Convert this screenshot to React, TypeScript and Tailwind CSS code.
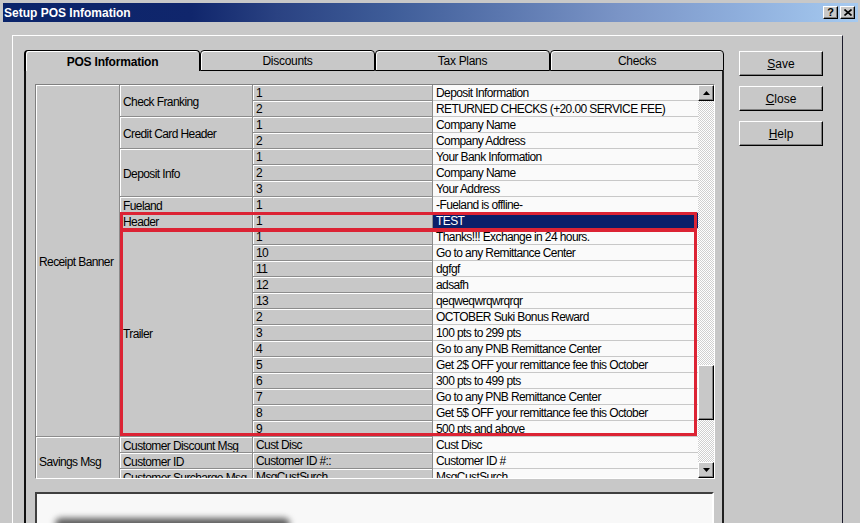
import React from 'react';
import clsx from 'clsx';

type Row = [string, string];
type Item = { label: string; rows: Row[]; selected?: boolean };
type Group = { name: string; items: Item[] };

const groups: Group[] = [
    {
        name: 'Receipt Banner',
        items: [
            { label: 'Check Franking', rows: [['1', 'Deposit Information'], ['2', 'RETURNED CHECKS (+20.00 SERVICE FEE)']] },
            { label: 'Credit Card Header', rows: [['1', 'Company Name'], ['2', 'Company Address']] },
            { label: 'Deposit Info', rows: [['1', 'Your Bank Information'], ['2', 'Company Name'], ['3', 'Your Address']] },
            { label: 'Fueland', rows: [['1', '-Fueland is offline-']] },
            { label: 'Header', rows: [['1', 'TEST']], selected: true },
            {
                label: 'Trailer',
                rows: [
                    ['1', 'Thanks!!! Exchange in 24 hours.'],
                    ['10', 'Go to any Remittance Center'],
                    ['11', 'dgfgf'],
                    ['12', 'adsafh'],
                    ['13', 'qeqweqwrqwrqrqr'],
                    ['2', 'OCTOBER Suki Bonus Reward'],
                    ['3', '100 pts to 299 pts'],
                    ['4', 'Go to any PNB Remittance Center'],
                    ['5', 'Get 2$ OFF your remittance fee this October'],
                    ['6', '300 pts to 499 pts'],
                    ['7', 'Go to any PNB Remittance Center'],
                    ['8', 'Get 5$ OFF your remittance fee this October'],
                    ['9', '500 pts and above'],
                ],
            },
        ],
    },
    {
        name: 'Savings Msg',
        items: [
            { label: 'Customer Discount Msg', rows: [['Cust Disc', 'Cust Disc']] },
            { label: 'Customer ID', rows: [['Customer ID #::', 'Customer ID #']] },
            { label: 'Customer Surcharge Msg', rows: [['MsgCustSurch', 'MsgCustSurch']] },
        ],
    },
];

const spans: Record<number, string> = {
    1: 'row-span-1',
    2: 'row-span-2',
    3: 'row-span-3',
    13: 'row-span-13',
    22: 'row-span-22',
};

const greyCell = 'bg-[#c8c8c8] border-r border-b border-[#8c8c8c] shadow-[inset_1px_1px_0_#ffffff] pl-[3px] whitespace-nowrap overflow-hidden';

function Raised({ children, className }: { children: React.ReactNode; className?: string }) {
    return (
        <div className={clsx('bg-[#c8c8c8] border border-t-white border-l-white border-r-black border-b-black shadow-[inset_-1px_-1px_0_#808080] flex items-center justify-center', className)}>
            {children}
        </div>
    );
}

function Arrow({ down }: { down?: boolean }) {
    return (
        <svg width="7" height="4" viewBox="0 0 7 4">
            <path d={down ? 'M0 0h7L3.5 4z' : 'M0 4h7L3.5 0z'} fill="#000" />
        </svg>
    );
}

function Grid() {
    const cells: React.ReactNode[] = [];
    groups.forEach((g) => {
        const total = g.items.reduce((n, it) => n + it.rows.length, 0);
        cells.push(
            <div key={g.name} className={clsx(spans[total], greyCell, 'flex items-center pt-[2px]')}>{g.name}</div>
        );
        g.items.forEach((it) => {
            cells.push(
                <div key={g.name + it.label} className={clsx(spans[it.rows.length], greyCell, 'flex items-center pt-[2px]')}>{it.label}</div>
            );
            it.rows.forEach(([k, v], i) => {
                cells.push(
                    <div key={it.label + i + 'k'} className={clsx(greyCell, 'pt-[1px] leading-[14px]')}>{k}</div>
                );
                cells.push(
                    <div
                        key={it.label + i + 'v'}
                        className={clsx(
                            'border-b border-[#c8c8c8] pl-[3px] pt-[1px] leading-[14px] whitespace-nowrap overflow-hidden',
                            it.selected ? 'bg-[#0a1f6a] text-white' : 'bg-[#fafafa]'
                        )}
                    >
                        {v}
                    </div>
                );
            });
        });
    });

    return (
        <div className="w-[680px] border border-t-[#808080] border-l-[#808080] border-r-white border-b-white">
            <div className="relative flex h-[393px] overflow-hidden">
                <div className="grid w-[662px] grid-cols-[84px_133px_180px_265px] auto-rows-[16px] content-start">
                    {cells}
                </div>
                <div className="flex w-[16px] flex-col">
                    <Raised className="h-[16px]"><Arrow /></Raised>
                    <div className="h-[264px] bg-[repeating-conic-gradient(#d0d0d0_0%_25%,#ffffff_0%_50%)] bg-[length:2px_2px]" />
                    <Raised className="h-[55px]">{null}</Raised>
                    <div className="flex-1 bg-[repeating-conic-gradient(#d0d0d0_0%_25%,#ffffff_0%_50%)] bg-[length:2px_2px]" />
                    <Raised className="h-[16px]"><Arrow down /></Raised>
                </div>
                <div className="absolute left-[84px] top-[127px] h-[19px] w-[577px] border-[3px] border-[#dc2334]" />
                <div className="absolute left-[84px] top-[144px] h-[207px] w-[577px] border-[3px] border-[#dc2334]" />
            </div>
        </div>
    );
}

const tabs = [
    { name: 'POS Information', w: 'w-[176px]', active: true },
    { name: 'Discounts', w: 'w-[175px]' },
    { name: 'Tax Plans', w: 'w-[175px]' },
    { name: 'Checks', w: 'w-[174px]' },
];

function App() {
    return (
        <div className="relative h-[523px] w-[860px] overflow-hidden bg-[#c8c8c8] pl-[3px] pr-[2px] pt-[3px] font-['Liberation_Sans',Arial,sans-serif] text-[12px] tracking-[-0.6px] text-black">
            {/* title bar */}
            <div className="flex h-[19px] items-center justify-between bg-[linear-gradient(90deg,#0a246a_0%,#10266c_22%,#2a4282_32%,#3e5c98_45%,#5a76ae_58%,#7a94c6_72%,#8eaedc_86%,#a6caf0_100%)] pl-[1px] pr-[3px]">
                <span className="text-[12px] font-bold tracking-normal text-white">Setup POS Infomation</span>
                <div className="flex gap-[2px]">
                    <Raised className="h-[13px] w-[15px] text-[11px] font-bold tracking-normal">?</Raised>
                    <Raised className="h-[13px] w-[15px]">
                        <svg width="8" height="7" viewBox="0 0 8 7">
                            <path d="M0.5 0.5L7.5 6.5M7.5 0.5L0.5 6.5" stroke="#000" strokeWidth="1.6" />
                        </svg>
                    </Raised>
                </div>
            </div>

            {/* etched frame */}
            <div className="ml-[9px] mt-[13px] flex h-[520px] w-[831px] border-l border-t border-r border-l-white border-t-white border-r-[#1a1a2a] pl-[11px] pt-[14px]">
                {/* tab control */}
                <div className="w-[700px]">
                    <div className="flex h-[21px]">
                        {tabs.map((t) => (
                            <div
                                key={t.name}
                                className={clsx(
                                    t.w,
                                    'flex items-center justify-center rounded-t-[4px] border-t border-r border-black bg-[#c8c8c8] pt-[1px] shadow-[inset_1px_1px_0_#ffffff]',
                                    t.active ? 'border-l-2 text-[12px] font-bold tracking-[-0.2px]' : 'border-b border-l tracking-[-0.3px]'
                                )}
                            >
                                {t.name}
                            </div>
                        ))}
                    </div>
                    <div className="h-[460px] border-l-2 border-r-2 border-l-[#101010] border-r-[#202020] pl-[9px] pt-[13px]">
                        <Grid />
                        <div className="mt-[13px] h-[60px] w-[679px] overflow-hidden border-2 border-t-[#404040] border-l-[#404040] border-r-white border-b-white bg-[#f8f8f8]">
                            <div className="ml-[18px] mt-[24px] h-[12px] w-[235px] rounded-full bg-[#5e5e5e] blur-[3px]" />
                        </div>
                    </div>
                </div>

                {/* buttons */}
                <div className="ml-[15px] mt-[1px] flex flex-col gap-[10px] text-[12px] tracking-normal">
                    <Raised className="h-[25px] w-[84px]"><span><u>S</u>ave</span></Raised>
                    <Raised className="h-[25px] w-[84px]"><span><u>C</u>lose</span></Raised>
                    <Raised className="h-[25px] w-[84px]"><span><u>H</u>elp</span></Raised>
                </div>
            </div>
        </div>
    );
}

export default App;
